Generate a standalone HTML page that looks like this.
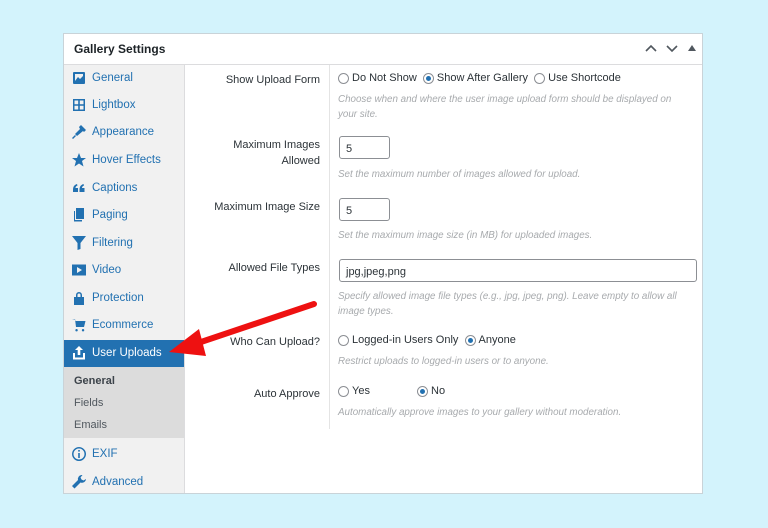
<!DOCTYPE html><html><head><style>
body{margin:0;width:768px;height:528px;background:#d3f3fc;font-family:"Liberation Sans",sans-serif;position:relative;overflow:hidden}
.panel{position:absolute;left:63px;top:33px;width:640px;height:461px;background:#fff;border:1px solid #c9d3d8;box-sizing:border-box}
.hd{position:absolute;left:0;top:0;right:0;height:30px;border-bottom:1px solid #dcdcde;font-size:12px;font-weight:bold;color:#1d2327;line-height:30px;padding-left:10px}
.side{position:absolute;left:0;top:31px;width:120px;bottom:0;background:#f1f1f1;border-right:1px solid #dcdcde}
.it{position:absolute;left:0;width:120px;height:26px;font-size:11.5px;color:#2271b1;line-height:26px}
.it svg{position:absolute;left:8px;top:6px;width:14px;height:14px;fill:#2271b1}
.it span{position:absolute;left:28px}
.act{background:#2271b1;color:#fff}
.act svg{fill:#fff}
.sub{position:absolute;left:0;top:303px;width:120px;height:71px;background:#dcdcdc}
.sub div{position:absolute;left:10px;font-size:11px;color:#50575e}
.lbl{position:absolute;font-size:11px;color:#2c3338;text-align:right;right:382px;line-height:16px}
.c{position:absolute;left:274px;font-size:11px;color:#2c3338}
.d{position:absolute;left:274px;font-size:9.8px;font-style:italic;color:#a7aaad;line-height:15px}
.r{display:inline-block;width:11px;height:11px;border:1px solid #8c8f94;border-radius:50%;vertical-align:-3px;margin-right:3px;position:relative;box-sizing:border-box}
.r.on::after{content:"";position:absolute;left:2px;top:2px;width:5px;height:5px;border-radius:50%;background:#2271b1}
.in{position:absolute;left:275px;width:51px;height:23px;border:1px solid #8c8f94;border-radius:3px;box-sizing:border-box;font-size:11px;padding:6px 0 0 6px;color:#2c3338}
.vl{position:absolute;left:265px;top:31px;width:1px;height:364px;background:#e4e4e4}
</style></head><body>
<div class="panel">
<div class="hd">Gallery Settings
<svg style="position:absolute;left:581px;top:10px" width="12" height="9" viewBox="0 0 12 9"><path d="M1 7L6 2L11 7" stroke="#50575e" stroke-width="1.6" fill="none"/></svg>
<svg style="position:absolute;left:602px;top:10px" width="12" height="9" viewBox="0 0 12 9"><path d="M1 2L6 7L11 2" stroke="#50575e" stroke-width="1.6" fill="none"/></svg>
<svg style="position:absolute;left:624px;top:11px" width="8" height="6"><path d="M0 6L4 0L8 6Z" fill="#50575e"/></svg>
</div>
<div class="side">
<div class="it" style="top:0"><svg viewBox="0 0 14 14"><rect x="1" y="1" width="12" height="12" rx="1"/><rect x="3" y="3" width="8" height="7" fill="#f1f1f1"/><path d="M3 10L6 6L8 8L11 5V10Z"/></svg><span>General</span></div>
<div class="it" style="top:27px"><svg viewBox="0 0 14 14"><path d="M1 1H13V13H1Z M2.5 2.5V6.2H6.2V2.5Z M7.8 2.5V6.2H11.5V2.5Z M2.5 7.8V11.5H6.2V7.8Z M7.8 7.8V11.5H11.5V7.8Z" fill-rule="evenodd"/></svg><span>Lightbox</span></div>
<div class="it" style="top:54px"><svg viewBox="0 0 14 14"><path d="M7 2L9 0L14 5L12 7L11 6L5 11L3 9L8 4Z M3 10L4 11L1 14L0 13Z"/></svg><span>Appearance</span></div>
<div class="it" style="top:82px"><svg viewBox="0 0 14 14"><path d="M7 0L9 5H14L10 8L11.5 13.5L7 10.5L2.5 13.5L4 8L0 5H5Z"/></svg><span>Hover Effects</span></div>
<div class="it" style="top:110px"><svg viewBox="0 0 14 14"><path d="M1 9C1 6 2 4 5 3L5.5 4.5C4 5 3.5 6 3.5 7H6V11H1Z M7.5 9C7.5 6 8.5 4 11.5 3L12 4.5C10.5 5 10 6 10 7H12.5V11H7.5Z"/></svg><span>Captions</span></div>
<div class="it" style="top:137px"><svg viewBox="0 0 14 14"><path d="M4 0H12V11H4Z M2 3H3V12H10V13.5H2Z"/></svg><span>Paging</span></div>
<div class="it" style="top:165px"><svg viewBox="0 0 14 14"><path d="M0 0H14L8.5 7V13L5.5 14V7Z"/></svg><span>Filtering</span></div>
<div class="it" style="top:192px"><svg viewBox="0 0 14 14"><path d="M0 1.5H14V12.5H0Z M5 4V10L10 7Z" fill-rule="evenodd"/></svg><span>Video</span></div>
<div class="it" style="top:220px"><svg viewBox="0 0 14 14"><path d="M2 6H12V14H2Z M4 6V4A3 3 0 0 1 10 4V6H8.5V4A1.5 1.5 0 0 0 5.5 4V6Z"/></svg><span>Protection</span></div>
<div class="it" style="top:247px"><svg viewBox="0 0 14 14"><path d="M0 1H3L4 9H12L13.5 3H3.5L3.2 1.5Z M4.5 11A1.2 1.2 0 1 0 4.6 11Z M11 11A1.2 1.2 0 1 0 11.1 11Z"/></svg><span>Ecommerce</span></div>
<div class="it act" style="top:275px;height:27px;line-height:27px"><svg viewBox="0 0 14 14"><path d="M7 0L11 4H8.3V9H5.7V4H3Z M1 7H3V11.5H11V7H13V13.5H1Z"/></svg><span>User Uploads</span></div>
<div class="sub" style="top:302px"><div style="top:8px;font-weight:bold;color:#3c434a">General</div><div style="top:30px">Fields</div><div style="top:52px">Emails</div></div>
<div class="it" style="top:376px"><svg viewBox="0 0 14 14"><path d="M7 0A7 7 0 1 0 7.01 0Z M7 1.5A5.5 5.5 0 1 1 6.99 1.5Z M6.2 6H7.8V11H6.2Z M6.2 3H7.8V4.6H6.2Z" fill-rule="evenodd"/></svg><span>EXIF</span></div>
<div class="it" style="top:404px"><svg viewBox="0 0 14 14"><path d="M9.5 0A4 4 0 0 0 6 5L0 11L2.5 13.5L8.5 7.5A4 4 0 0 0 14 4L11.5 5.5L9.5 4.5L8.5 2.5L10.5 0Z"/></svg><span>Advanced</span></div>
</div>
<div class="vl"></div>
<div class="lbl" style="top:38px">Show Upload Form</div>
<div class="c" style="top:38px"><span class="r"></span>Do Not Show &nbsp;<span class="r on"></span>Show After Gallery &nbsp;<span class="r"></span>Use Shortcode</div>
<div class="d" style="top:58px">Choose when and where the user image upload form should be displayed on<br>your site.</div>
<div class="lbl" style="top:103px">Maximum Images<br>Allowed</div>
<div class="in" style="top:102px">5</div>
<div class="d" style="top:133px">Set the maximum number of images allowed for upload.</div>
<div class="lbl" style="top:165px">Maximum Image Size</div>
<div class="in" style="top:164px">5</div>
<div class="d" style="top:194px">Set the maximum image size (in MB) for uploaded images.</div>
<div class="lbl" style="top:226px">Allowed File Types</div>
<div class="in" style="top:225px;width:358px">jpg,jpeg,png</div>
<div class="d" style="top:255px">Specify allowed image file types (e.g., jpg, jpeg, png). Leave empty to allow all<br>image types.</div>
<div class="lbl" style="top:300px">Who Can Upload?</div>
<div class="c" style="top:300px"><span class="r"></span>Logged-in Users Only &nbsp;<span class="r on"></span>Anyone</div>
<div class="d" style="top:320px">Restrict uploads to logged-in users or to anyone.</div>
<div class="lbl" style="top:352px">Auto Approve</div>
<div class="c" style="top:351px"><span class="r"></span>Yes <span style="display:inline-block;width:44px"></span><span class="r on"></span>No</div>
<div class="d" style="top:371px">Automatically approve images to your gallery without moderation.</div>
</div>
<svg style="position:absolute;left:0;top:0" width="768" height="528"><path d="M314 304L198 343" stroke="#ee1111" stroke-width="6" stroke-linecap="round"/><path d="M169 352L199 329L206 356Z" fill="#ee1111"/></svg>
</body></html>
